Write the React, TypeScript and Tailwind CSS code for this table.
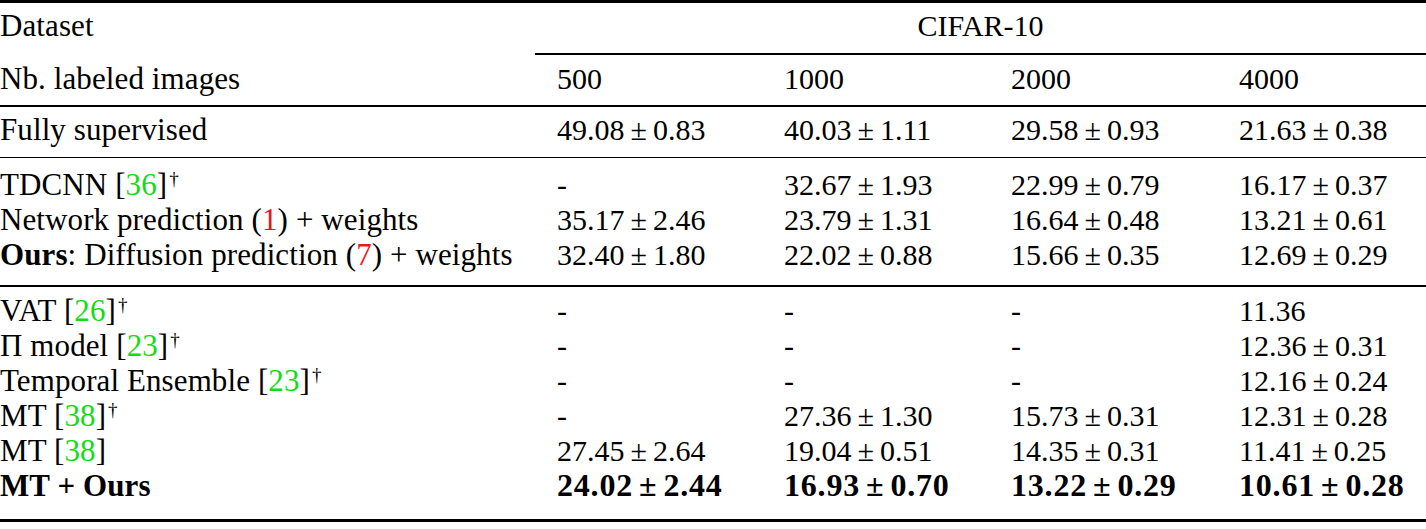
import React from "react";

type Row = {
  label: React.ReactNode;
  values: string[];
  bold?: boolean;
};

const Cite: React.FC<{ n: string }> = ({ n }) => (
  <>
    [<span className="text-[#14dc14]">{n}</span>]
  </>
);

const Eq: React.FC<{ n: string }> = ({ n }) => (
  <>
    (<span className="text-[#e81818]">{n}</span>)
  </>
);

const Dag = () => <sup className="ml-[2px] text-[19px] top-[-0.55em]">†</sup>;

const Num: React.FC<{ v: string; bold?: boolean }> = ({ v, bold }) => {
  const parts = v.split("±");
  return (
    <span className={bold ? "font-bold text-[32px] tracking-[0.8px]" : ""}>
      {parts[0].trim()}
      {parts.length > 1 && (
        <>
          <span className="mx-[6px]">±</span>
          {parts[1].trim()}
        </>
      )}
    </span>
  );
};

const Rule: React.FC<{ className: string }> = ({ className }) => (
  <div className={`w-full bg-black ${className}`} />
);

const TableRow: React.FC<{ row: Row }> = ({ row }) => (
  <div className="grid grid-cols-[557px_227px_227px_228px_1fr] h-[35px] leading-[35px] whitespace-nowrap">
    <div className={`text-[31px] tracking-[0.1px] ${row.bold ? "font-bold" : ""}`}>
      {row.label}
    </div>
    {row.values.map((v, i) => (
      <div key={i}>
        <Num v={v} bold={row.bold} />
      </div>
    ))}
  </div>
);

const baselineRows: Row[] = [
  {
    label: "Fully supervised",
    values: ["49.08 ± 0.83", "40.03 ± 1.11", "29.58 ± 0.93", "21.63 ± 0.38"],
  },
];

const diffusionRows: Row[] = [
  {
    label: (
      <>
        TDCNN <Cite n="36" />
        <Dag />
      </>
    ),
    values: ["-", "32.67 ± 1.93", "22.99 ± 0.79", "16.17 ± 0.37"],
  },
  {
    label: (
      <>
        Network prediction <Eq n="1" /> + weights
      </>
    ),
    values: ["35.17 ± 2.46", "23.79 ± 1.31", "16.64 ± 0.48", "13.21 ± 0.61"],
  },
  {
    label: (
      <>
        <b>Ours</b>: Diffusion prediction <Eq n="7" /> + weights
      </>
    ),
    values: ["32.40 ± 1.80", "22.02 ± 0.88", "15.66 ± 0.35", "12.69 ± 0.29"],
  },
];

const otherRows: Row[] = [
  {
    label: (
      <>
        VAT <Cite n="26" />
        <Dag />
      </>
    ),
    values: ["-", "-", "-", "11.36"],
  },
  {
    label: (
      <>
        Π model <Cite n="23" />
        <Dag />
      </>
    ),
    values: ["-", "-", "-", "12.36 ± 0.31"],
  },
  {
    label: (
      <>
        Temporal Ensemble <Cite n="23" />
        <Dag />
      </>
    ),
    values: ["-", "-", "-", "12.16 ± 0.24"],
  },
  {
    label: (
      <>
        MT <Cite n="38" />
        <Dag />
      </>
    ),
    values: ["-", "27.36 ± 1.30", "15.73 ± 0.31", "12.31 ± 0.28"],
  },
  {
    label: (
      <>
        MT <Cite n="38" />
      </>
    ),
    values: ["27.45 ± 2.64", "19.04 ± 0.51", "14.35 ± 0.31", "11.41 ± 0.25"],
  },
  {
    label: "MT + Ours",
    values: ["24.02 ± 2.44", "16.93 ± 0.70", "13.22 ± 0.29", "10.61 ± 0.28"],
    bold: true,
  },
];

export default function App() {
  return (
    <div className="w-[1426px] h-[529px] bg-white text-black font-['Liberation_Serif',serif] text-[30px] overflow-hidden">
      <Rule className="h-[3px]" />

      {/* header */}
      <div className="pt-[4.5px] grid grid-cols-[535px_1fr] h-[39.5px] leading-[35px] items-start">
        <div className="text-[31px] tracking-[0.1px]">Dataset</div>
        <div className="text-center">CIFAR-10</div>
      </div>
      <div className="pt-[10.5px] grid grid-cols-[535px_1fr]">
        <div />
        <div className="h-[1.5px] bg-black" />
      </div>
      <div className="pt-[6px] grid grid-cols-[557px_227px_227px_228px_1fr] h-[41px] leading-[35px]">
        <div className="text-[31px] tracking-[0.1px]">Nb. labeled images</div>
        <div>500</div>
        <div>1000</div>
        <div>2000</div>
        <div>4000</div>
      </div>
      <div className="pt-[9px]">
        <Rule className="h-[2px]" />
      </div>

      <div className="pt-[5.5px] pb-[9.5px]">
        {baselineRows.map((r, i) => (
          <TableRow key={i} row={r} />
        ))}
      </div>
      <Rule className="h-[1.5px]" />

      <div className="pt-[9px] pb-[13px]">
        {diffusionRows.map((r, i) => (
          <TableRow key={i} row={r} />
        ))}
      </div>
      <Rule className="h-[1.5px]" />

      <div className="pt-[6.5px] pb-[16px]">
        {otherRows.map((r, i) => (
          <TableRow key={i} row={r} />
        ))}
      </div>
      <Rule className="h-[3px]" />
    </div>
  );
}
